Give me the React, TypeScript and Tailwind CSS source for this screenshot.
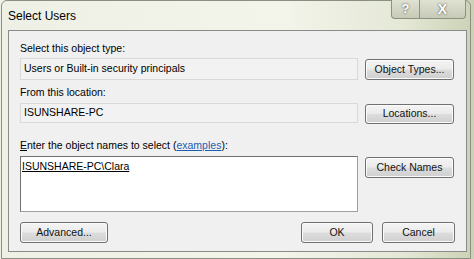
import React from "react";

const font = { fontFamily: '"Liberation Sans", Arial, sans-serif' };

function WinButton({ children, className = "" }: { children: React.ReactNode; className?: string }) {
  return (
    <div
      className={`flex items-center justify-center rounded-[3px] border border-[#707070] bg-[linear-gradient(to_bottom,#f4f4f4_0%,#ebebeb_48%,#dddddd_52%,#cfcfcf_100%)] text-[10.5px] text-[#111] shadow-[inset_0_0_0_1px_#fbfbfb] ${className}`}
    >
      {children}
    </div>
  );
}

export default function App() {
  return (
    <div
      className="relative h-[259px] w-[474px] overflow-hidden bg-[linear-gradient(to_right,#eef0e6_0%,#f3f4ea_60%,#e4e8d6_85%,#cbd2b4_100%)]"
      style={font}
    >
      {/* glass frame edge */}
      <div className="pointer-events-none absolute inset-y-0 left-[1px] right-[3px] rounded-t-[6px] border border-[#8a8f84]" />

      {/* caption buttons */}
      <div className="absolute right-[8px] top-0 flex h-[19px]">
        <div className="flex w-[29px] items-center justify-center rounded-bl-[4px] border border-t-0 border-[#8c9181] bg-[linear-gradient(to_bottom,#dfe2d3,#c6cab6)] text-[13px] font-bold text-white [text-shadow:0_0_2px_#333]">
          ?
        </div>
        <div className="flex w-[46px] items-center justify-center rounded-br-[4px] border border-l-0 border-t-0 border-[#8c9181] bg-[linear-gradient(to_bottom,#dfe2d3,#c6cab6)] text-[14px] font-bold text-white [text-shadow:0_0_2px_#333]">
          X
        </div>
      </div>

      {/* title */}
      <div className="flex h-[30px] items-center pl-[8px] pt-[1px] text-[12px] text-black">Select Users</div>

      {/* client area */}
      <div className="ml-[8px] flex h-[222px] w-[459px] flex-col border border-[#8a8a8a] bg-[#f0f0f0] px-[11px] pt-[10px] text-[10.5px]">
        <div className="h-[15px] leading-[15px] text-black">Select this object type:</div>
        <div className="mt-[2px] flex items-start gap-[7px]">
          <div className="flex h-[22px] w-[338px] items-center border border-[#d9d9d9] bg-[#f2f2f2] pl-[3px] text-black">
            Users or Built-in security principals
          </div>
          <WinButton className="mt-[1px] h-[21px] w-[89px]">Object Types...</WinButton>
        </div>

        <div className="mt-[5px] h-[15px] leading-[15px] text-black">From this location:</div>
        <div className="mt-[3px] flex items-start gap-[7px]">
          <div className="flex h-[20px] w-[338px] items-center border border-[#d9d9d9] bg-[#f2f2f2] pl-[3px] text-black">
            ISUNSHARE-PC
          </div>
          <WinButton className="mt-[1px] h-[20px] w-[89px]">Locations...</WinButton>
        </div>

        <div className="mt-[14px] h-[15px] leading-[15px] text-black">
          <span className="underline">E</span>nter the object names to select (
          <span className="text-[#1a5fb4] underline">examples</span>):
        </div>
        <div className="mt-[3px] flex items-start gap-[7px]">
          <div className="h-[56px] w-[338px] border border-[#a0a0a0] border-l-[#707070] border-t-[#707070] bg-white pl-[1px] pt-[3px] leading-[13px] text-black">
            <span className="underline">ISUNSHARE-PC\Clara</span>
          </div>
          <WinButton className="mt-[1px] h-[21px] w-[89px]">Check Names</WinButton>
        </div>

        <div className="mt-[10px] flex items-center">
          <WinButton className="h-[21px] w-[88px]">Advanced...</WinButton>
          <div className="flex-1" />
          <WinButton className="h-[21px] w-[72px]">OK</WinButton>
          <WinButton className="ml-[9px] h-[21px] w-[73px]">Cancel</WinButton>
        </div>
      </div>
    </div>
  );
}
